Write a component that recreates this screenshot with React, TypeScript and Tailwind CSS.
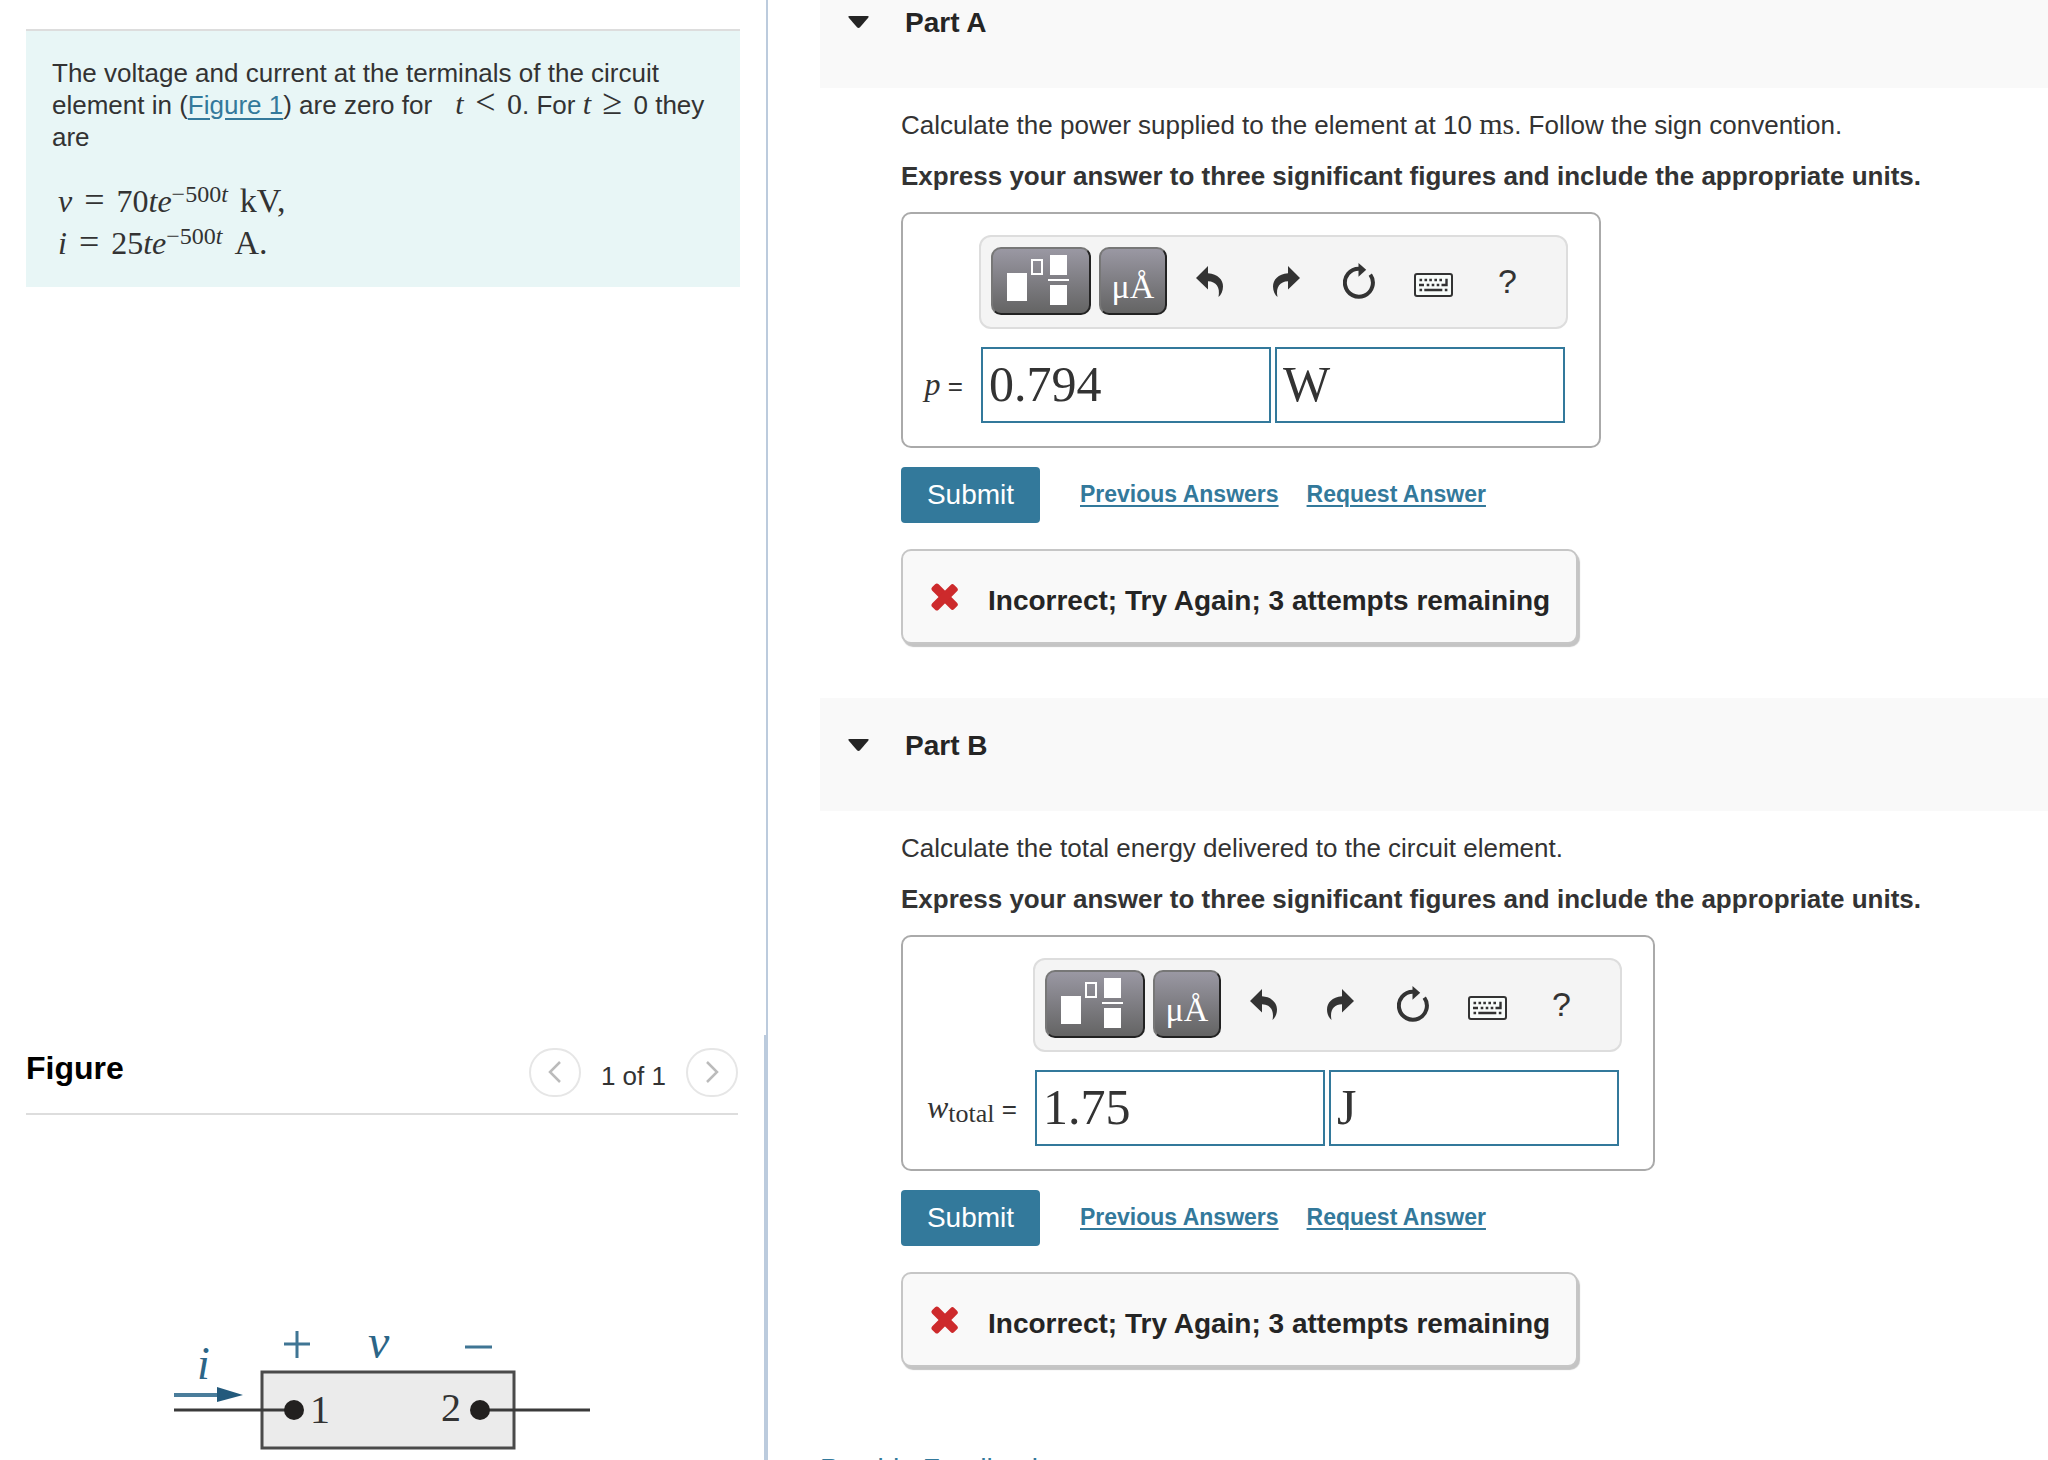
import { ReactNode, useState } from 'react';

function UndoIcon({ className = '' }: { className?: string }) {
  return (
    <svg className={className} width="27" height="31" viewBox="0 0 27 31" fill="#333" aria-hidden="true">
      <path d="M0 12 12 0v7.3C22 8 27 14 27 20.5c0 4.500-2 8.500-4.500 10.500C24.500 21 20 15.500 12 15.300v8.200Z" />
    </svg>
  );
}

function ResetIcon() {
  return (
    <svg width="32" height="36" viewBox="0 0 32 36" aria-hidden="true">
      <path d="M27.300 11.600A14 14 0 1 1 16 5.700" fill="none" stroke="#333" strokeWidth="4" />
      <path d="M15.500 0v13.700l7.700-6.900Z" fill="#333" />
    </svg>
  );
}

function KeyboardIcon() {
  return (
    <svg width="39" height="24" viewBox="0 0 39 24" aria-hidden="true">
      <rect x="1" y="1" width="37" height="22" rx="2" fill="#f8fcfa" stroke="#333" strokeWidth="2" />
      <path
        d="M5.500 7h2.600m2.400 0h2.600m2.200 0h2.600m2.500 0h2.600m2.400 0h2.600M5 12h5m2.700 0h2.600m2.400 0h2.600m2.400 0h2.600M5.500 17h2.600m2.200 0h18m2.500 0h2.600"
        stroke="#333"
        strokeWidth="2.400"
      />
      <path d="M32.500 5.800V12h-5" fill="none" stroke="#333" strokeWidth="2.400" />
    </svg>
  );
}

function TemplateIcon() {
  return (
    <svg width="62" height="52" viewBox="0 0 62 52" fill="#fff" aria-hidden="true">
      <rect x="0" y="18" width="20" height="28" />
      <rect x="25" y="5" width="10" height="14" fill="none" stroke="#fff" strokeWidth="2" />
      <rect x="43" y="0" width="17" height="20" />
      <rect x="41" y="24" width="21" height="2" />
      <rect x="43" y="30" width="17" height="20" />
    </svg>
  );
}

function CrossIcon() {
  return (
    <svg className="shrink-0" width="28" height="28" viewBox="0 0 28 28" fill="#cd2a2c" aria-hidden="true">
      <rect x="-2" y="9.500" width="31" height="9" rx="2.500" transform="rotate(45 14 14)" />
      <rect x="-2" y="9.500" width="31" height="9" rx="2.500" transform="rotate(-45 14 14)" />
    </svg>
  );
}

function Chevron({ flip = false }: { flip?: boolean }) {
  return (
    <svg className={flip ? 'rotate-180' : ''} width="14" height="22" viewBox="0 0 14 22" aria-hidden="true">
      <path d="M12 1 2 11l10 10" fill="none" stroke="#bbb" strokeWidth="2.500" />
    </svg>
  );
}

function CircuitFigure() {
  return (
    <svg
      className="block ml-[170px] font-['Liberation_Serif',serif]"
      width="430"
      height="135"
      viewBox="0 0 430 135"
      role="img"
      aria-label="Circuit element with terminals 1 and 2"
    >
      <rect x="92" y="47" width="252" height="76" fill="#ebebeb" stroke="#4a4a4a" strokeWidth="3" />
      <path d="M4 85h120M310 85h110" stroke="#3a3a3a" strokeWidth="3" />
      <circle cx="124" cy="85" r="10" fill="#22201f" />
      <circle cx="310" cy="85" r="10" fill="#22201f" />
      <path d="M4 70h44" stroke="#4a7d9b" strokeWidth="4" />
      <path d="M47 62 73 70 47 77Z" fill="#235a7c" />
      <path d="M114 19h26M127 6v27M295 22h27" stroke="#3f7594" strokeWidth="3" />
      <text x="27" y="54" fontSize="46" fontStyle="italic" fill="#2c6587">i</text>
      <text x="198" y="33" fontSize="48" fontStyle="italic" fill="#2c6587">v</text>
      <text x="140" y="98" fontSize="40" fill="#333">1</text>
      <text x="271" y="96" fontSize="40" fill="#333">2</text>
    </svg>
  );
}

function Operator({ children }: { children: ReactNode }) {
  return <span className="mx-1 text-4xl leading-4">{children}</span>;
}

function Equation({ name, factor, unit }: { name: string; factor: string; unit: string }) {
  return (
    <p className="font-['Liberation_Serif',serif] text-[32px] leading-[42px]">
      <i>{name}</i> <Operator>=</Operator> {factor}
      <i>te</i>
      <sup className="-top-2.5 text-2xl leading-none">
        −500<i>t</i>
      </sup>
      <span className="ml-3 text-[34px] leading-4">{unit}</span>
    </p>
  );
}

const toolButton =
  'flex h-[68px] items-center justify-center rounded-[10px] border-2 border-t-[#777] border-l-[#777] border-r-[#222] border-b-[#222] bg-linear-to-b from-[#9a98a3] to-[#646464]';

function Toolbar() {
  return (
    <div className="flex h-[94px] w-[589px] items-start rounded-xl border-2 border-[#ddd] bg-[#f4f4f4] px-[10px] pt-[10px]">
      <button type="button" className={`${toolButton} w-[100px] pr-1.5`} aria-label="Templates">
        <TemplateIcon />
      </button>
      <button
        type="button"
        className={`${toolButton} ml-2 w-[68px] pt-3 font-['Liberation_Serif',serif] text-[34px] leading-none text-white`}
      >
        μÅ
      </button>
      <div className="ml-[29px] flex h-[68px] items-center">
        <button type="button" aria-label="Undo">
          <UndoIcon />
        </button>
        <button type="button" className="ml-[50px]" aria-label="Redo">
          <UndoIcon className="-scale-x-100" />
        </button>
        <button type="button" className="ml-[43px]" aria-label="Reset">
          <ResetIcon />
        </button>
        <button type="button" className="ml-[39px] pt-2" aria-label="Keyboard shortcuts">
          <KeyboardIcon />
        </button>
        <button type="button" className="ml-[45px] text-[34px] leading-none">
          ?
        </button>
      </div>
    </div>
  );
}

type PartProps = {
  id: string;
  title: string;
  question: ReactNode;
  symbol: ReactNode;
  labelWidth: string;
  value: string;
  unit: string;
};

function Part({ id, title, question, symbol, labelWidth, value, unit }: PartProps) {
  const [answer, setAnswer] = useState(value);
  const [units, setUnits] = useState(unit);
  const field =
    "h-[76px] w-[290px] border-2 border-[#33799b] bg-white px-1.5 pb-0.5 font-['Liberation_Serif',serif] text-[50px] leading-none text-[#333] outline-none";

  return (
    <section>
      <header className="h-[113px] bg-[#f9f9f9] pt-[30px] pl-7">
        <button type="button" className="flex items-center text-[28px] leading-8 font-bold text-[#252525]">
          <svg width="21" height="12" viewBox="0 0 21 12" fill="#252525" aria-hidden="true">
            <path d="M1.500 0h18q2 0 .7 1.700L12 11.200q-1.500 1.500-3 0L.8 1.700Q-.5 0 1.500 0Z" />
          </svg>
          <h2 className="ml-9 pt-0.5">{title}</h2>
        </button>
      </header>

      <form className="pt-[21px] pb-[54px] pl-[81px]" onSubmit={(e) => e.preventDefault()}>
        <p className="text-[26px] leading-8">{question}</p>
        <p className="mt-[19px] text-[26px] leading-8 font-bold">
          Express your answer to three significant figures and include the appropriate units.
        </p>

        <div className="mt-5 flex h-[236px] w-fit rounded-[10px] border-2 border-[#aaa] pt-[21px] pr-[31px]">
          <label htmlFor={`${id}-answer`} className={`${labelWidth} shrink-0 pt-[133px] pr-4 text-right text-[26px] leading-8`}>
            {symbol} =
          </label>
          <div>
            <Toolbar />
            <div className="mt-[18px] flex gap-1 pl-0.5">
              <input
                id={`${id}-answer`}
                className={field}
                value={answer}
                onChange={(e) => setAnswer(e.target.value)}
              />
              <input
                aria-label="Units"
                className={field}
                value={units}
                onChange={(e) => setUnits(e.target.value)}
              />
            </div>
          </div>
        </div>

        <div className="mt-[19px] flex h-14 items-center text-[23px] font-bold text-[#33799b]">
          <button type="submit" className="h-14 w-[139px] rounded-sm bg-[#33799b] text-[28px] font-normal text-white">
            Submit
          </button>
          <a href="#previous" className="ml-10 pb-0.5 underline decoration-2 underline-offset-3">
            Previous Answers
          </a>
          <a href="#request" className="ml-7 pb-0.5 underline decoration-2 underline-offset-3">
            Request Answer
          </a>
        </div>

        <div className="mt-[26px] flex h-[95px] w-[677px] items-center rounded-[10px] border-2 border-[#c6c6c6] bg-[#f9f9f9] pl-7 text-[28px] leading-8 font-bold text-[#252525] shadow-[2px_3px_1px_#c4c4c4]">
          <CrossIcon />
          <span className="ml-[29px] pt-2">Incorrect; Try Again; 3 attempts remaining</span>
        </div>
      </form>
    </section>
  );
}

const serif = "font-['Liberation_Serif',serif] text-[30px] leading-none";

export default function App() {
  return (
    <div className="flex h-screen overflow-hidden bg-white font-['Liberation_Sans',Arial,sans-serif] text-[#333]">
      <aside className="flex w-[37.5%] shrink-0 flex-col">
        <div className="flex-1 border-r-2 border-[#bccbdd] pt-[29px] pr-[26px] pl-[26px]">
          <div className="h-[258px] border-t-2 border-[#ddd] bg-[#e8f6f6] px-[26px] pt-[26px]">
            <p className="text-[26px] leading-8">
              The voltage and current at the terminals of the circuit element in (
              <a href="#figure" className="text-[#33799b] underline underline-offset-4">
                Figure 1
              </a>
              ) are zero for{' '}
              <span className={`${serif} ml-4`}>
                <i>t</i> <Operator>&lt;</Operator> 0
              </span>
              . For{' '}
              <span className={serif}>
                <i>t</i> <Operator>≥</Operator>
              </span>{' '}
              0 they are
            </p>
            <div className="mt-[27px] pl-1.5">
              <Equation name="v" factor="70" unit="kV," />
              <Equation name="i" factor="25" unit="A." />
            </div>
          </div>
        </div>

        <div id="figure" className="h-[425px] border-r-4 border-[#bccbdd] pr-[26px] pl-[26px]">
          <div className="flex h-20 items-center border-b-2 border-[#ddd] pb-1">
            <h2 className="mr-auto pb-2 text-[32px] leading-10 font-bold text-black">Figure</h2>
            <button
              type="button"
              className="flex h-[49px] w-[52px] items-center justify-center rounded-full border-2 border-[#e6e6e6]"
              aria-label="Previous figure"
            >
              <Chevron />
            </button>
            <span className="mx-5 pt-2 text-[26px] leading-8">1 of 1</span>
            <button
              type="button"
              className="flex h-[49px] w-[52px] items-center justify-center rounded-full border-2 border-[#e6e6e6]"
              aria-label="Next figure"
            >
              <Chevron flip />
            </button>
          </div>
          <div className="-ml-[26px] pt-[210px]">
            <CircuitFigure />
          </div>
        </div>
      </aside>

      <main className="-mt-[25px] min-w-0 flex-1 pl-[52px]">
        <Part
          id="part-a"
          title="Part A"
          question={
            <>
              Calculate the power supplied to the element at 10 <span className={serif}>ms</span>. Follow the sign
              convention.
            </>
          }
          symbol={<i className="font-['Liberation_Serif',serif] text-[32px] leading-none">p</i>}
          labelWidth="w-[76px]"
          value="0.794"
          unit="W"
        />
        <Part
          id="part-b"
          title="Part B"
          question="Calculate the total energy delivered to the circuit element."
          symbol={
            <span className="font-['Liberation_Serif',serif] text-[32px] leading-none">
              <i>w</i>
              <sub className="-bottom-1 text-[26px] leading-none">total</sub>
            </span>
          }
          labelWidth="w-[130px]"
          value="1.75"
          unit="J"
        />
        <a href="#feedback" className="mt-8 block text-[28px] leading-8 text-[#33799b]">
          Provide Feedback
        </a>
      </main>
    </div>
  );
}
